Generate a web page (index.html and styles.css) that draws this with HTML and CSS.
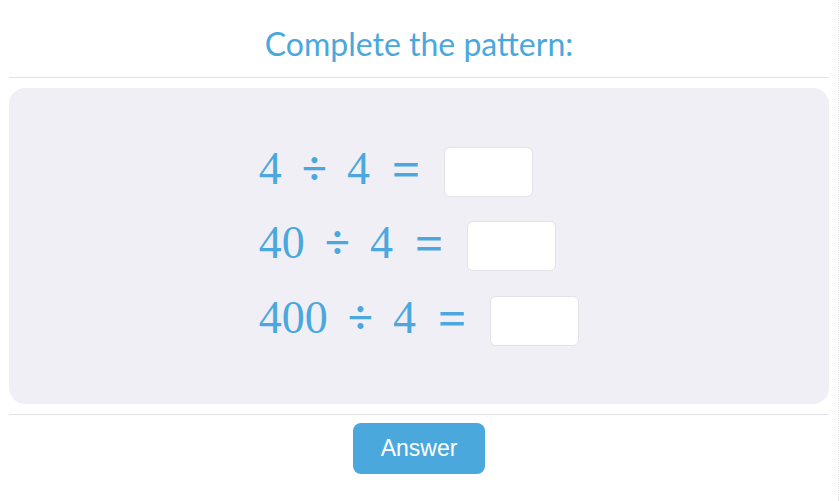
FILE: index.html
```html
<!doctype html>
<html lang="en">
  <head>
    <meta charset="UTF-8" />
    <meta name="viewport" content="width=device-width, initial-scale=1.0" />
    <title>Complete the pattern</title>
    <link rel="stylesheet" href="styles.css">
  </head>
  <body>
    <div class="page">
      <!-- Заголовок задания -->
      <h1 class="task-title">Complete the pattern:</h1>
      <div class="divider"></div>

      <!-- Примеры -->
      <div class="board">
        <div class="rows">
          <div class="row">
            <span class="num">4</span>
            <span class="op">÷</span>
            <span class="num">4</span>
            <span class="op op-eq">=</span>
            <input class="answer-box" type="text" />
          </div>
          <div class="row">
            <span class="num">40</span>
            <span class="op">÷</span>
            <span class="num">4</span>
            <span class="op op-eq">=</span>
            <input class="answer-box" type="text" />
          </div>
          <div class="row">
            <span class="num">400</span>
            <span class="op">÷</span>
            <span class="num">4</span>
            <span class="op op-eq">=</span>
            <input class="answer-box" type="text" />
          </div>
        </div>
      </div>

      <div class="divider divider-bottom"></div>

      <!-- Кнопка ответа -->
      <div class="actions">
        <button class="answer-btn" type="button">Answer</button>
      </div>
    </div>
  </body>
</html>
```

FILE: styles.css
```css
/* Сброс стилей */
* {
  margin: 0;
  padding: 0;
  box-sizing: border-box;
}

body {
  background: #ffffff;
  font-family: "Lato", "Open Sans", sans-serif;
}

/* Страница */
.page {
  width: 839px;
  min-height: 501px;
  padding: 0 9px;
  border-right: 1px dotted #dcdce0;
}

/* Заголовок */
.task-title {
  height: 77px;
  padding-top: 24px;
  font-size: 32px;
  line-height: 40px;
  font-weight: 400;
  color: #4aa8dc;
  text-align: center;
}

.divider {
  height: 1px;
  background: #e2e2e6;
}

/* Поле с примерами */
.board {
  margin-top: 10px;
  height: 316px;
  border-radius: 16px;
  background: #f1eff6;
  display: flex;
  align-items: center;
  justify-content: center;
}

.rows {
  display: flex;
  flex-direction: column;
  gap: 24.5px;
}

.row {
  display: flex;
  align-items: center;
  gap: 20px;
  height: 50px;
  font-family: "Liberation Serif", "Times New Roman", serif;
  font-size: 46px;
  color: #4ba8de;
}

.num,
.op {
  line-height: 44px;
  padding-bottom: 6px;
}

.op {
  font-weight: 700;
}

.op-eq {
  font-size: 50px;
  margin-left: 2px;
}

.answer-box {
  width: 89px;
  height: 50px;
  margin-left: 4px;
  border: 1px solid #e3e1ea;
  border-radius: 6px;
  background: #ffffff;
  outline: none;
}

.divider-bottom {
  margin-top: 10px;
}

/* Кнопка */
.actions {
  display: flex;
  justify-content: center;
  padding-top: 8px;
}

.answer-btn {
  width: 132px;
  height: 51px;
  border: none;
  border-radius: 8px;
  background: #4ba8dd;
  color: #ffffff;
  font-family: "Liberation Sans", Arial, sans-serif;
  font-size: 23px;
  cursor: pointer;
}
```
